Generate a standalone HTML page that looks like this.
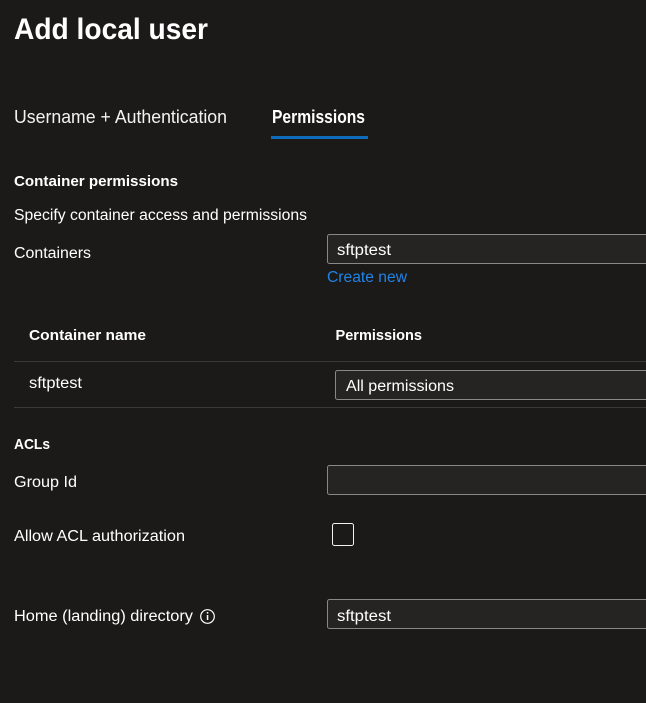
<!DOCTYPE html>
<html lang="en"><head><meta charset="utf-8"><title>Add local user</title>
<style>
html,body{margin:0;padding:0;background:#1b1a19;width:646px;height:703px;overflow:hidden}
svg{display:block}
text{font-family:"Liberation Sans",sans-serif;fill:#fff;font-size:15.5px}
.b{font-weight:700}
</style></head><body>
<svg width="646" height="703" viewBox="0 0 646 703" xmlns="http://www.w3.org/2000/svg">
<rect width="646" height="703" fill="#1b1a19"/>
<text x="14" y="39" class="b" style="font-size:30px" textLength="194" lengthAdjust="spacingAndGlyphs">Add local user</text>
<text x="14" y="123" style="font-size:18.5px;fill:#f3f2f1" textLength="213" lengthAdjust="spacingAndGlyphs">Username + Authentication</text>
<text x="272" y="123" class="b" style="font-size:18px" textLength="93" lengthAdjust="spacingAndGlyphs">Permissions</text>
<rect x="271" y="136" width="97" height="3" fill="#0f6cbd"/>
<text x="14" y="186" class="b" style="font-size:15px" textLength="164" lengthAdjust="spacingAndGlyphs">Container permissions</text>
<text x="14" y="220" textLength="293" lengthAdjust="spacingAndGlyphs">Specify container access and permissions</text>
<text x="14" y="258" textLength="77" lengthAdjust="spacingAndGlyphs">Containers</text>
<rect x="327.5" y="234.5" width="340" height="29" rx="2" fill="#252423" stroke="#8a8886"/>
<text x="337" y="255" textLength="54" lengthAdjust="spacingAndGlyphs">sftptest</text>
<text x="327" y="282" style="fill:#2083e6" textLength="80" lengthAdjust="spacingAndGlyphs">Create new</text>
<text x="29" y="340" class="b" style="font-size:15px" textLength="117" lengthAdjust="spacingAndGlyphs">Container name</text>
<text x="335.5" y="340" class="b" style="font-size:15px" textLength="86.5" lengthAdjust="spacingAndGlyphs">Permissions</text>
<rect x="14" y="361" width="632" height="1" fill="#3b3a39"/>
<text x="29" y="388" textLength="53" lengthAdjust="spacingAndGlyphs">sftptest</text>
<rect x="335.5" y="370.5" width="340" height="29" rx="2" fill="#252423" stroke="#8a8886"/>
<text x="346" y="391" textLength="108" lengthAdjust="spacingAndGlyphs">All permissions</text>
<rect x="14" y="407" width="632" height="1" fill="#3b3a39"/>
<text x="14" y="449" class="b" style="font-size:15px" textLength="36" lengthAdjust="spacingAndGlyphs">ACLs</text>
<text x="14" y="487" textLength="63" lengthAdjust="spacingAndGlyphs">Group Id</text>
<rect x="327.5" y="465.5" width="340" height="29" rx="2" fill="#252423" stroke="#8a8886"/>
<text x="14" y="541" textLength="171" lengthAdjust="spacingAndGlyphs">Allow ACL authorization</text>
<rect x="332.5" y="523.5" width="21" height="22" rx="2" fill="none" stroke="#f3f2f1"/>
<text x="14" y="621" textLength="179" lengthAdjust="spacingAndGlyphs">Home (landing) directory</text>
<circle cx="207.5" cy="616.5" r="6.8" fill="none" stroke="#fff" stroke-width="1.2"/>
<rect x="206.800" y="612" width="1.500" height="1.600" fill="#fff"/>
<rect x="206.800" y="615" width="1.500" height="5" fill="#fff"/>
<rect x="327.5" y="599.5" width="340" height="29" rx="2" fill="#252423" stroke="#8a8886"/>
<text x="337" y="621" textLength="54" lengthAdjust="spacingAndGlyphs">sftptest</text>
</svg>
</body></html>
